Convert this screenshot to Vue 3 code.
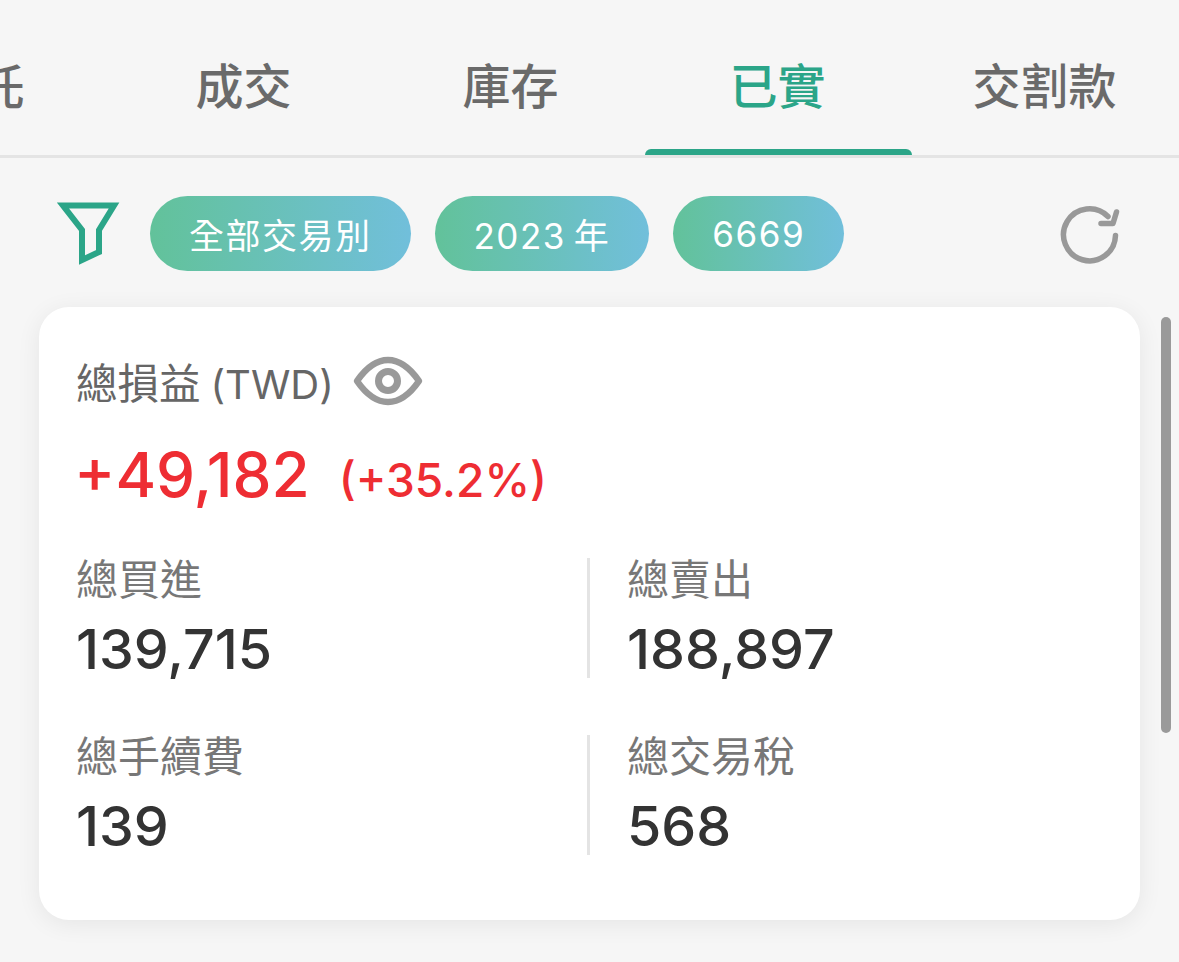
<template>
  <div class="screen">
    <nav class="tabs">
      <div
        v-for="tab in tabs"
        :key="tab"
        class="tab"
        :class="{ 'tab--active': tab === activeTab }"
      >
        {{ tab }}
      </div>
    </nav>

    <div class="filters">
      <svg class="filter-icon" viewBox="0 0 63 63" fill="none">
        <path d="M6 3.5 H57 L42 28 V50 L25 58 V28 Z" stroke="#2ba588" stroke-width="6" stroke-linejoin="miter" />
      </svg>
      <span v-for="chip in chips" :key="chip" class="chip">{{ chip }}</span>
      <svg class="refresh-icon" viewBox="0 0 60 60" fill="none">
        <path d="M55.5 31.5 A26 26 0 1 1 48 12.5" stroke="#999" stroke-width="5.5" stroke-linecap="round" />
        <path d="M56.5 8 L53 19.5 L41 19.5" stroke="#999" stroke-width="5.5" stroke-linecap="round" stroke-linejoin="round" />
      </svg>
    </div>

    <section class="card">
      <div class="card__label">
        <span>總損益<span class="card__unit">(TWD)</span></span>
        <svg class="eye-icon" viewBox="0 0 70 50" fill="none">
          <path d="M4 25 C13 12 23 4 35 4 C47 4 57 12 66 25 C57 38 47 46 35 46 C23 46 13 38 4 25 Z" stroke="#999" stroke-width="6.5" stroke-linejoin="round" />
          <circle cx="35" cy="25" r="9.5" stroke="#999" stroke-width="7" />
        </svg>
      </div>
      <div class="total">
        <span class="total__value">+49,182</span>
        <span class="total__rate">(+35.2%)</span>
      </div>
      <div class="stats">
        <div v-for="stat in stats" :key="stat.label" class="stat">
          <div class="stat__label">{{ stat.label }}</div>
          <div class="stat__value">{{ stat.value }}</div>
        </div>
      </div>
    </section>

    <div class="scrollbar"></div>
  </div>
</template>

<script setup>
const tabs = ["委託", "成交", "庫存", "已實", "交割款"];
const activeTab = "已實";
const chips = ["全部交易別", "2023\u2009年", "6669"];
const stats = [
  { label: "總買進", value: "139,715" },
  { label: "總賣出", value: "188,897" },
  { label: "總手續費", value: "139" },
  { label: "總交易稅", value: "568" },
];
</script>

<style>
html,
body {
  background: #f6f6f6;
}
</style>

<style scoped>
.screen {
  position: relative;
  width: 1179px;
  height: 962px;
  overflow: hidden;
  background: #f6f6f6;
  font-family: "Inter", "Noto Sans CJK TC", sans-serif;
}

.tabs {
  display: grid;
  grid-template-columns: repeat(5, 267px);
  height: 158px;
  margin-left: -156px;
  width: 1335px;
  border-bottom: 3px solid #e4e4e4;
  box-sizing: border-box;
}

.tab {
  position: relative;
  padding: 52px 2px 0 0;
  text-align: center;
  font-size: 48px;
  line-height: 70px;
  font-weight: 500;
  color: #6a6a6a;
}

.tab--active {
  color: #2ba588;
}

.tab--active::after {
  content: "";
  position: absolute;
  left: 0;
  right: 0;
  bottom: 0;
  height: 6px;
  border-radius: 6px 6px 0 0;
  background: #2ba588;
}

.filters {
  display: flex;
  align-items: center;
  height: 75px;
  margin-top: 38px;
  padding: 0 59px 0 57px;
  gap: 24px;
}

.filter-icon {
  width: 63px;
  height: 63px;
  margin-right: 6px;
}

.chip {
  height: 75px;
  padding: 0 39px;
  border-radius: 38px;
  display: flex;
  align-items: center;
  font-size: 35px;
  letter-spacing: 1.5px;
  color: #fff;
  background: linear-gradient(90deg, #62c29a, #71bfdb);
}

.refresh-icon {
  width: 60px;
  height: 60px;
  margin-left: auto;
}

.card {
  box-sizing: border-box;
  width: 1101px;
  height: 613px;
  margin: 36px 0 0 39px;
  padding: 44px 37px 0;
  border-radius: 30px;
  background: #fff;
  box-shadow: 0 4px 24px rgba(0, 0, 0, 0.07);
}

.card__label {
  display: flex;
  align-items: center;
  gap: 19px;
  height: 60px;
  font-size: 41.5px;
  color: #666;
}

.card__unit {
  margin-left: 10px;
  font-size: 40px;
}

.eye-icon {
  width: 70px;
  height: 50px;
}

.total {
  display: flex;
  align-items: baseline;
  gap: 29px;
  margin-top: 24px;
  color: #ee2d33;
  line-height: 80px;
}

.total__value {
  margin-left: -2px;
  font-size: 62px;
  font-weight: 500;
}

.total__rate {
  font-size: 46px;
  font-weight: 500;
}

.stats {
  display: grid;
  grid-template-columns: 511px 1fr;
  grid-auto-rows: 120px;
  row-gap: 57px;
  margin-top: 38px;
}

.stat:nth-child(even) {
  border-left: 3px solid #e4e4e4;
  padding-left: 37px;
}

.stat__label {
  font-size: 42px;
  line-height: 44px;
  color: #777;
}

.stat__value {
  margin-top: 16px;
  font-size: 55.5px;
  line-height: 62px;
  font-weight: 500;
  color: #333;
}

.scrollbar {
  position: absolute;
  left: 1161px;
  top: 317px;
  width: 10px;
  height: 416px;
  border-radius: 5px;
  background: #9a9a9a;
}
</style>
